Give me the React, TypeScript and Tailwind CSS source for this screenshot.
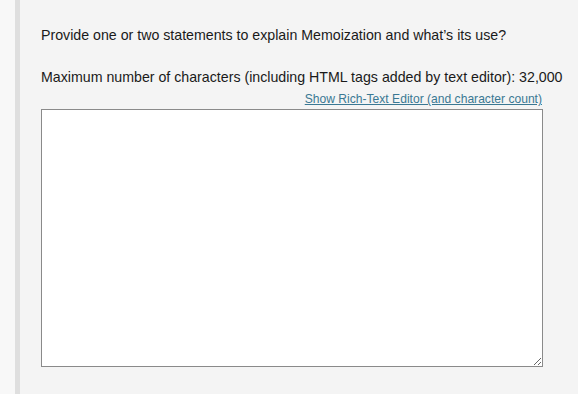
export default function App() {
  return (
    <div className="flex h-[394px] w-[578px] overflow-hidden bg-[#f4f4f4] font-['Liberation_Sans',Arial,sans-serif] text-[#1a1a1a]">
      {/* left rail */}
      <div className="w-[15px] shrink-0 bg-[#f8f8f8]" />
      <div className="w-[5px] shrink-0 bg-[#dfdfdf]" />

      <div className="flex flex-col pl-[21px] pt-[25px]">
        <p className="text-[14.2px] leading-[20px]">
          Provide one or two statements to explain Memoization and what’s its use?
        </p>
        <p className="mt-[22px] whitespace-nowrap text-[14.2px] leading-[20px]">
          Maximum number of characters (including HTML tags added by text editor): 32,000
        </p>
        <div className="mt-[5px] flex w-[501px] justify-end">
          <a href="#" className="text-[12.1px] leading-[14px] text-[#3a7893] underline">
            Show Rich-Text Editor (and character count)
          </a>
        </div>
        <textarea className="mt-[3px] h-[258px] w-[502px] resize border border-[#8a8a8a] bg-white" />
      </div>
    </div>
  )
}
